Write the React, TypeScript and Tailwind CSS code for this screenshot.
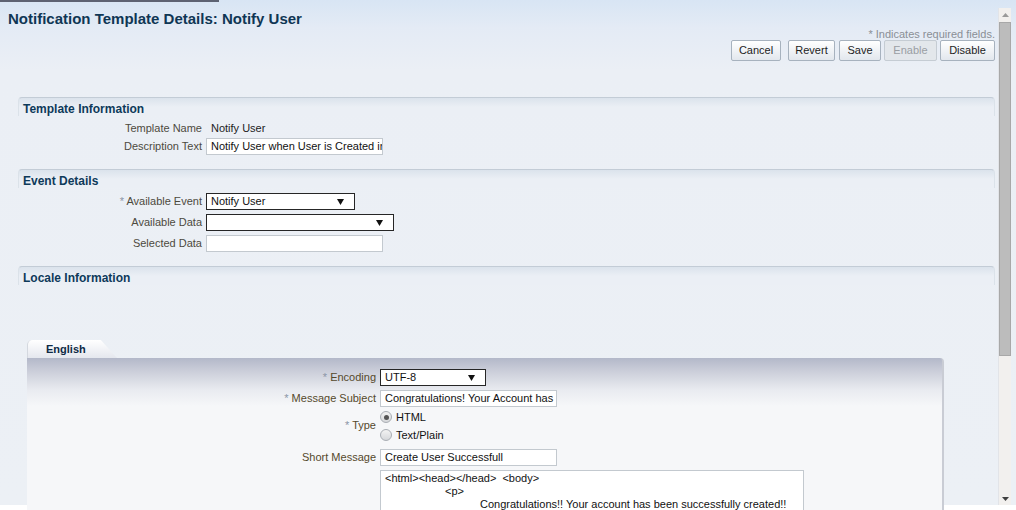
import React from "react";

const Caret = () => (
  <svg width="7" height="6" viewBox="0 0 7 6" className="shrink-0">
    <polygon points="0,0 7,0 3.5,6" fill="#111" />
  </svg>
);

function SectionHeader({ title }: { title: string }) {
  return (
    <div className="border-t border-x border-t-[#c3ccd6] border-x-[#dbe2e9] rounded-t-[4px] bg-[linear-gradient(to_bottom,#dbe3ec_0px,#ebeff5_9px)] pt-[4px] pl-[4px] h-[19px]">
      <div className="text-[12px] leading-[15px] font-bold text-[#0e3a5a]">{title}</div>
    </div>
  );
}

function Label({ text, req, panel }: { text: string; req?: boolean; panel?: boolean }) {
  return (
    <div className={`text-[11px] leading-[17px] text-right whitespace-nowrap ${panel ? "text-[#55492c]" : "text-[#4d4a3e]"}`}>
      {req && <span className="text-[#8b95a6]">* </span>}
      {text}
    </div>
  );
}

function TextInput({ value, w }: { value: string; w: string }) {
  return (
    <div className={`${w} h-[17px] border border-[#c3c9cf] bg-white pl-[4px] text-[11px] leading-[15px] text-[#111] overflow-hidden whitespace-nowrap`}>
      {value}
    </div>
  );
}

function Select({ value, w }: { value: string; w: string }) {
  return (
    <div className={`${w} h-[17px] border border-[#262626] bg-white pl-[4px] pr-[10px] flex items-center justify-between text-[11px] leading-[15px] text-[#111]`}>
      <span>{value}</span>
      <Caret />
    </div>
  );
}

function Radio({ checked, label }: { checked?: boolean; label: string }) {
  return (
    <div className="h-[18px] flex items-center gap-[4px]">
      <div className="w-[12px] h-[12px] rounded-full border border-[#a9aeb4] bg-[linear-gradient(to_bottom,#f3f3f3,#d6d8db)] flex items-center justify-center">
        {checked && <div className="w-[5px] h-[5px] rounded-full bg-[#555]" />}
      </div>
      <span className="text-[11px] text-[#111]">{label}</span>
    </div>
  );
}

function Btn({ text, disabled, cls }: { text: string; disabled?: boolean; cls: string }) {
  return (
    <div
      className={`${cls} h-[21px] flex items-center justify-center rounded-[2px] border text-[11px] ${
        disabled
          ? "border-[#c5ccd3] bg-[#e3e7eb] text-[#9a9ea3]"
          : "border-[#a7b2be] bg-[linear-gradient(to_bottom,#ffffff,#e2e7ed)] text-[#1d1d1d]"
      }`}
    >
      {text}
    </div>
  );
}

export default function App() {
  return (
    <div className="w-[1016px] h-[510px] overflow-hidden bg-white font-['Liberation_Sans',Arial,sans-serif]">
      <div className="h-[505px] flex bg-[linear-gradient(to_bottom,#d8e5f4_0px,#e4ebf5_28px,#ebeff5_70px,#ecf0f5_100%)]">
        <div className="flex-1 min-w-0 flex flex-col">
          <div className="h-[2px] w-[219px] bg-[#5d6272] shrink-0" />
          <div className="mt-[8px] pl-[8px] h-[18px] text-[15px] leading-[18px] font-bold text-[#0f3654]">
            Notification Template Details: Notify User
          </div>
          <div className="mt-[1px] pr-[3px] text-right text-[11px] leading-[11px] h-[11px] text-[#8a8f96]">
            * Indicates required fields.
          </div>
          <div className="flex justify-end pr-[3px]">
            <Btn text="Cancel" cls="w-[50px]" />
            <Btn text="Revert" cls="w-[47px] ml-[7px]" />
            <Btn text="Save" cls="w-[42px] ml-[4px]" />
            <Btn text="Enable" disabled cls="w-[53px] ml-[3px]" />
            <Btn text="Disable" cls="w-[55px] ml-[3px]" />
          </div>

          <div className="ml-[18px] mr-[3px] mt-[36px] flex flex-col">
            <SectionHeader title="Template Information" />
            <div className="grid grid-cols-[184px_auto] gap-x-[4px] gap-y-[1px] mt-[4px] items-center">
              <Label text="Template Name" />
              <div className="text-[11px] leading-[17px] pl-[5px] text-[#222]">Notify User</div>
              <Label text="Description Text" />
              <TextInput value="Notify User when User is Created in" w="w-[177px]" />
            </div>

            <div className="mt-[14px]">
              <SectionHeader title="Event Details" />
            </div>
            <div className="grid grid-cols-[184px_auto] gap-x-[4px] gap-y-[4px] mt-[5px] items-center">
              <Label text="Available Event" req />
              <Select value="Notify User" w="w-[149px]" />
              <Label text="Available Data" />
              <Select value="" w="w-[188px]" />
              <Label text="Selected Data" />
              <TextInput value="" w="w-[177px]" />
            </div>

            <div className="mt-[14px]">
              <SectionHeader title="Locale Information" />
            </div>

            <div className="ml-[9px] w-[917px] mt-[55px]">
              <div className="h-[18px] w-[90px] pl-[18px] pt-[2px] text-[11px] leading-[14px] font-bold text-[#0e2a45] [clip-path:polygon(0_0,82%_0,100%_100%,0_100%)] rounded-tl-[5px] bg-[linear-gradient(to_bottom,#ffffff,#e4e7ee)] border-l border-[#d4d8df]">
                English
              </div>
              <div className="h-[160px] rounded-tr-[4px] border-r-2 border-[#c9ccd4] bg-[linear-gradient(to_bottom,#b3b8c9_0px,#c9ccd8_12px,#e9ebf0_32px,#f6f7f9_48px,#f6f7f9_100%)] pt-[11px]">
                <div className="grid grid-cols-[349px_auto] gap-x-[4px] items-center">
                  <Label text="Encoding" req panel />
                  <Select value="UTF-8" w="w-[106px]" />
                  <div className="col-span-2 h-[4px]" />
                  <Label text="Message Subject" req panel />
                  <TextInput value="Congratulations! Your Account has" w="w-[177px]" />
                  <Label text="Type" req panel />
                  <div className="flex flex-col pt-[1px]">
                    <Radio checked label="HTML" />
                    <Radio label="Text/Plain" />
                  </div>
                  <div className="col-span-2 h-[5px]" />
                  <Label text="Short Message" panel />
                  <TextInput value="Create User Successfull" w="w-[177px]" />
                  <div className="col-span-2 h-[4px]" />
                  <div />
                  <div className="w-[424px] h-[60px] border border-[#c3c9cf] bg-white pl-[4px] pt-[1px] text-[11px] leading-[13px] text-[#111] whitespace-pre overflow-hidden">
                    <div>{"<html><head></head>  <body>"}</div>
                    <div className="pl-[60px]">{"<p>"}</div>
                    <div className="pl-[95px]">Congratulations!! Your account has been successfully created!!</div>
                  </div>
                </div>
              </div>
            </div>
          </div>
        </div>

        <div className="w-[13px] mr-[5px] mt-[8px] h-[497px] bg-[#f2f0ee] border-l border-[#e2e4e8] flex flex-col items-center">
          <div className="h-[14px] flex items-center justify-center">
            <svg width="7" height="4" viewBox="0 0 7 4"><polygon points="0,4 7,4 3.5,0" fill="#9a9a9a" /></svg>
          </div>
          <div className="w-[12px] h-[334px] bg-[#bcbcbc] border border-[#a8a8a8]" />
          <div className="flex-1" />
          <div className="h-[12px] flex items-center justify-center">
            <svg width="7" height="4" viewBox="0 0 7 4"><polygon points="0,0 7,0 3.5,4" fill="#3f3f3f" /></svg>
          </div>
        </div>
      </div>
      <div className="h-[5px] bg-white" />
    </div>
  );
}
